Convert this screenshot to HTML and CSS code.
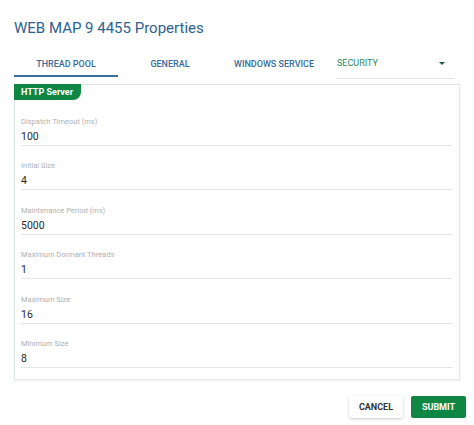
FILE: index.html
```html
<!DOCTYPE html>
<html>
<head>
<meta charset="utf-8">
<link rel="stylesheet" href="styles.css">
</head>
<body>
<div class="dialog">
  <h1 class="title">WEB MAP 9 4455 Properties</h1>
  <div class="tabs">
    <div class="tab active">THREAD POOL</div>
    <div class="tab">GENERAL</div>
    <div class="tab">WINDOWS SERVICE</div>
    <div class="select">
      <span class="select-text">SECURITY</span>
      <span class="caret"></span>
    </div>
  </div>
  <div class="card">
    <div class="badge">HTTP Server</div>
    <div class="fields">
      <div class="field"><div class="label">Dispatch Timeout (ms)</div><div class="value">100</div></div>
      <div class="field"><div class="label">Initial Size</div><div class="value">4</div></div>
      <div class="field"><div class="label">Maintenance Period (ms)</div><div class="value">5000</div></div>
      <div class="field"><div class="label">Maximum Dormant Threads</div><div class="value">1</div></div>
      <div class="field"><div class="label">Maximum Size</div><div class="value">16</div></div>
      <div class="field"><div class="label">Minimum Size</div><div class="value">8</div></div>
    </div>
  </div>
  <div class="actions">
    <button class="btn cancel">CANCEL</button>
    <button class="btn submit">SUBMIT</button>
  </div>
</div>
</body>
</html>
```
FILE: styles.css
```css
* { box-sizing: border-box; }
html, body { margin: 0; padding: 0; background: #fff; }
body { font-family: Roboto, "Liberation Sans", sans-serif; width: 474px; height: 425px; overflow: hidden; }
.dialog { padding: 18px 8px 0 14px; }
.title { margin: 0; font-size: 15px; font-weight: 400; line-height: 20px; color: #2d6190; }
.tabs { display: flex; margin-top: 13px; height: 28px; }
.tab { width: 104px; height: 26px; line-height: 26px; text-align: center; font-size: 9px; font-weight: 500; color: #3a6c9c; border-bottom: 2px solid transparent; }
.tab.active { border-bottom-color: #3a6c9c; }
.select { margin-left: 10px; width: 118px; height: 28px; border-bottom: 1px solid #e3e3e3; display: flex; align-items: center; justify-content: space-between; padding: 0 9px 3px 1px; }
.select-text { font-size: 9px; color: #2f8a57; font-weight: 400; }
.caret { width: 0; height: 0; border-left: 3px solid transparent; border-right: 3px solid transparent; border-top: 3px solid #1d5e3c; }
.card { margin-top: 5px; width: 446px; border: 1px solid #dfe8e8; box-shadow: 0 1px 2px rgba(0,0,0,0.08); padding-bottom: 11px; }
.badge { display: block; width: fit-content; background: #0f8743; color: #fff; font-size: 9px; font-weight: 700; height: 16px; line-height: 16px; padding: 0 8px 0 7px; border-radius: 0 0 8px 0; margin: -1px 0 0 -1px; }
.fields { padding: 1px 6px 0 6px; }
.field { padding-top: 14.5px; border-bottom: 1px solid #e6e6e6; }
.label { font-size: 7.5px; line-height: 12px; color: #b0b0b0; }
.value { font-size: 10.5px; line-height: 16px; margin-top: 1px; color: #2a2a2a; }
.actions { display: flex; justify-content: flex-end; gap: 8px; margin-top: 16px; }
.btn { font-family: Roboto, "Liberation Sans", sans-serif; font-size: 9px; font-weight: 700; height: 22px; border: none; border-radius: 2px; padding: 0; }
.cancel { width: 54px; background: #fff; color: #333; box-shadow: 0 1px 3px rgba(0,0,0,0.2); }
.submit { width: 55px; background: #0f8743; color: #fff; }
```
